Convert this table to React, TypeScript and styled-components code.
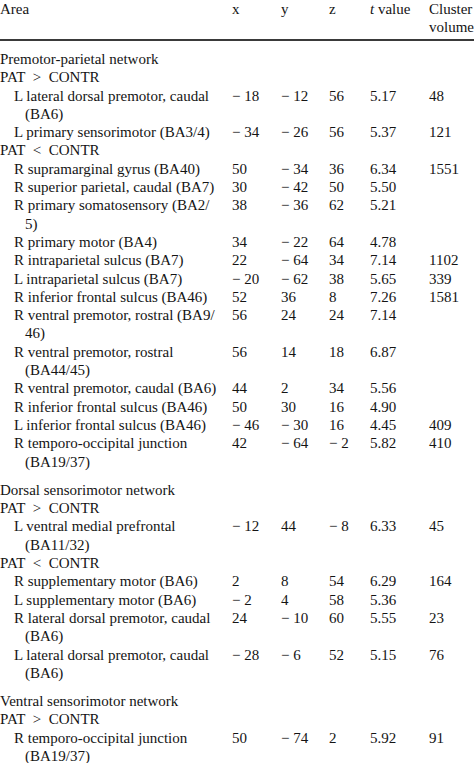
import {createGlobalStyle} from "styled-components";
import styled from "styled-components";

const GlobalStyle = createGlobalStyle`
  html, body {
    margin: 0;
    padding: 0;
    background: #ffffff;
  }

  body {
    width: 474px;
    height: 763px;
    overflow: hidden;
  }
`

const COLUMNS = "232px 49px 48px 41px 59px 1fr";

const StyledTable = styled.div`
  width: 474px;

  font-family: "Liberation Serif", "Times New Roman", serif;
  font-size: 15px;
  line-height: 18.3px;
  color: #141414;
`

const StyledHeader = styled.div`
  display: grid;
  grid-template-columns: ${COLUMNS};

  line-height: 18px;
  padding-bottom: 3px;
  border-bottom: 2px solid #3a3a3a;
`

const StyledHeadCell = styled.div`
  white-space: nowrap;
`

const StyledItalic = styled.span`
  font-style: italic;
`

const StyledBody = styled.div`
  padding-top: 9px;
`

const StyledLabel = styled.div<{ $gap?: boolean }>`
  padding-top: ${props => props.$gap ? "10px" : "0"};
  white-space: nowrap;
`

const StyledRow = styled.div`
  display: grid;
  grid-template-columns: ${COLUMNS};
`

const StyledAreaCell = styled.div`
  padding-left: 14px;
`

const StyledAreaLine = styled.div<{ $wrapped?: boolean }>`
  padding-left: ${props => props.$wrapped ? "11px" : "0"};
  white-space: nowrap;
`

const StyledNumCell = styled.div`
  white-space: nowrap;
`

type Entry = {
    area: string[]
    x: number
    y: number
    z: number
    t: string
    cluster?: number
}

type Contrast = {
    label: string
    entries: Entry[]
}

type Network = {
    name: string
    contrasts: Contrast[]
}

const GT = "PAT\u2002>\u2002CONTR";
const LT = "PAT\u2002<\u2002CONTR";

const networks: Network[] = [
    {
        name: "Premotor-parietal network",
        contrasts: [
            {
                label: GT,
                entries: [
                    {area: ["L lateral dorsal premotor, caudal", "(BA6)"], x: -18, y: -12, z: 56, t: "5.17", cluster: 48},
                    {area: ["L primary sensorimotor (BA3/4)"], x: -34, y: -26, z: 56, t: "5.37", cluster: 121},
                ]
            },
            {
                label: LT,
                entries: [
                    {area: ["R supramarginal gyrus (BA40)"], x: 50, y: -34, z: 36, t: "6.34", cluster: 1551},
                    {area: ["R superior parietal, caudal (BA7)"], x: 30, y: -42, z: 50, t: "5.50"},
                    {area: ["R primary somatosensory (BA2/", "5)"], x: 38, y: -36, z: 62, t: "5.21"},
                    {area: ["R primary motor (BA4)"], x: 34, y: -22, z: 64, t: "4.78"},
                    {area: ["R intraparietal sulcus (BA7)"], x: 22, y: -64, z: 34, t: "7.14", cluster: 1102},
                    {area: ["L intraparietal sulcus (BA7)"], x: -20, y: -62, z: 38, t: "5.65", cluster: 339},
                    {area: ["R inferior frontal sulcus (BA46)"], x: 52, y: 36, z: 8, t: "7.26", cluster: 1581},
                    {area: ["R ventral premotor, rostral (BA9/", "46)"], x: 56, y: 24, z: 24, t: "7.14"},
                    {area: ["R ventral premotor, rostral", "(BA44/45)"], x: 56, y: 14, z: 18, t: "6.87"},
                    {area: ["R ventral premotor, caudal (BA6)"], x: 44, y: 2, z: 34, t: "5.56"},
                    {area: ["R inferior frontal sulcus (BA46)"], x: 50, y: 30, z: 16, t: "4.90"},
                    {area: ["L inferior frontal sulcus (BA46)"], x: -46, y: -30, z: 16, t: "4.45", cluster: 409},
                    {area: ["R temporo-occipital junction", "(BA19/37)"], x: 42, y: -64, z: -2, t: "5.82", cluster: 410},
                ]
            },
        ]
    },
    {
        name: "Dorsal sensorimotor network",
        contrasts: [
            {
                label: GT,
                entries: [
                    {area: ["L ventral medial prefrontal", "(BA11/32)"], x: -12, y: 44, z: -8, t: "6.33", cluster: 45},
                ]
            },
            {
                label: LT,
                entries: [
                    {area: ["R supplementary motor (BA6)"], x: 2, y: 8, z: 54, t: "6.29", cluster: 164},
                    {area: ["L supplementary motor (BA6)"], x: -2, y: 4, z: 58, t: "5.36"},
                    {area: ["R lateral dorsal premotor, caudal", "(BA6)"], x: 24, y: -10, z: 60, t: "5.55", cluster: 23},
                    {area: ["L lateral dorsal premotor, caudal", "(BA6)"], x: -28, y: -6, z: 52, t: "5.15", cluster: 76},
                ]
            },
        ]
    },
    {
        name: "Ventral sensorimotor network",
        contrasts: [
            {
                label: GT,
                entries: [
                    {area: ["R temporo-occipital junction", "(BA19/37)"], x: 50, y: -74, z: 2, t: "5.92", cluster: 91},
                ]
            },
        ]
    },
];

// minus sign followed by a space, as in the printed table
const formatCoord = (value: number) =>
    value < 0 ? `\u2212 ${Math.abs(value)}` : `${value}`;

const EntryRow = ({entry}: { entry: Entry }) => (
    <StyledRow>
        <StyledAreaCell>
            {entry.area.map((line, index) => (
                <StyledAreaLine key={index} $wrapped={index > 0}>{line}</StyledAreaLine>
            ))}
        </StyledAreaCell>
        <StyledNumCell>{formatCoord(entry.x)}</StyledNumCell>
        <StyledNumCell>{formatCoord(entry.y)}</StyledNumCell>
        <StyledNumCell>{formatCoord(entry.z)}</StyledNumCell>
        <StyledNumCell>{entry.t}</StyledNumCell>
        <StyledNumCell>{entry.cluster ?? ""}</StyledNumCell>
    </StyledRow>
)

const App = () => {
    return (
        <>
            <GlobalStyle/>
            <StyledTable>
                <StyledHeader>
                    <StyledHeadCell>Area</StyledHeadCell>
                    <StyledHeadCell>x</StyledHeadCell>
                    <StyledHeadCell>y</StyledHeadCell>
                    <StyledHeadCell>z</StyledHeadCell>
                    <StyledHeadCell><StyledItalic>t</StyledItalic> value</StyledHeadCell>
                    <StyledHeadCell>Cluster<br/>volume</StyledHeadCell>
                </StyledHeader>

                <StyledBody>
                    {networks.map((network, networkIndex) => (
                        <div key={network.name}>
                            <StyledLabel $gap={networkIndex > 0}>{network.name}</StyledLabel>
                            {network.contrasts.map((contrast, contrastIndex) => (
                                <div key={contrastIndex}>
                                    <StyledLabel>{contrast.label}</StyledLabel>
                                    {contrast.entries.map((entry, entryIndex) => (
                                        <EntryRow key={entryIndex} entry={entry}/>
                                    ))}
                                </div>
                            ))}
                        </div>
                    ))}
                </StyledBody>
            </StyledTable>
        </>
    )
}
export default App;
